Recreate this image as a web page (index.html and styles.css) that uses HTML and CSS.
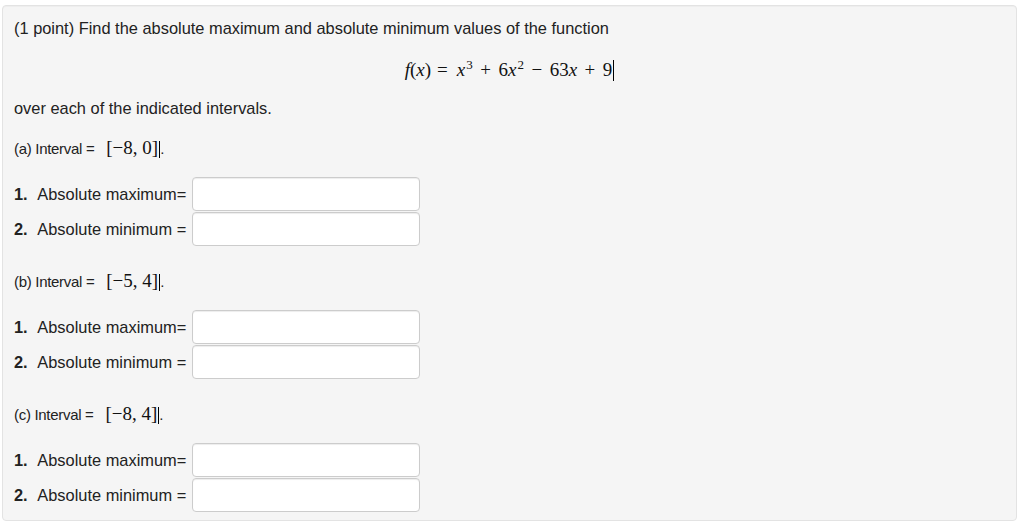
FILE: index.html
```html
<!DOCTYPE html>
<html>
<head>
<meta charset="utf-8">
<link rel="stylesheet" href="styles.css">
</head>
<body>
<div class="panel">
  <p class="line first">(1 point) Find the absolute maximum and absolute minimum values of the function</p>
  <div class="display">
    <span class="math big"><i>f</i>(<i>x</i>)<span class="rel">=</span><i>x</i><sup>3</sup><span class="bin">+</span>6<i>x</i><sup>2</sup><span class="bin">−</span>63<i>x</i><span class="bin">+</span>9<span class="caret"></span></span>
  </div>
  <p class="line">over each of the indicated intervals.</p>

  <section class="part">
    <p class="line interval">(a) Interval = <span class="math">[−8, 0]</span><span class="caret small"></span>.</p>
    <div class="row"><span class="num">1.</span> Absolute maximum= <span class="field"></span></div>
    <div class="row"><span class="num">2.</span> Absolute minimum = <span class="field"></span></div>
  </section>

  <section class="part">
    <p class="line interval">(b) Interval = <span class="math">[−5, 4]</span><span class="caret small"></span>.</p>
    <div class="row"><span class="num">1.</span> Absolute maximum= <span class="field"></span></div>
    <div class="row"><span class="num">2.</span> Absolute minimum = <span class="field"></span></div>
  </section>

  <section class="part">
    <p class="line interval">(c) Interval = <span class="math">[−8, 4]</span><span class="caret small"></span>.</p>
    <div class="row"><span class="num">1.</span> Absolute maximum= <span class="field"></span></div>
    <div class="row"><span class="num">2.</span> Absolute minimum = <span class="field"></span></div>
  </section>
</div>
</body>
</html>
```

FILE: styles.css
```css
html, body {
  margin: 0;
  padding: 0;
  background: #ffffff;
}

body {
  font-family: "Liberation Sans", Arial, Helvetica, sans-serif;
  font-size: 16.4px;
  color: #222;
}

.panel {
  margin: 5px 7px 0 2px;
  height: 516px;
  box-sizing: border-box;
  border: 1px solid #e3e3e3;
  border-radius: 4px;
  background: #f5f5f5;
  padding: 12px 11px 0 11px;
  box-shadow: inset 0 1px 1px rgba(0, 0, 0, 0.03);
}

.line {
  margin: 0;
  height: 20px;
  line-height: 20px;
  white-space: nowrap;
}

.display {
  margin-top: 20px;
  height: 24px;
  line-height: 24px;
  text-align: center;
  margin-bottom: 16px;
}

.math {
  font-family: "Liberation Serif", "Times New Roman", serif;
  color: #111;
  font-size: 19px;
}

.math.big {
  font-size: 19px;
}

.math i {
  font-style: italic;
}

.math sup {
  font-size: 13px;
  vertical-align: 0;
  position: relative;
  top: -7px;
  margin-left: 1px;
}

.rel {
  margin: 0 9px 0 6px;
}

.bin {
  margin: 0 7.5px;
}

.caret {
  display: inline-block;
  width: 1px;
  height: 21px;
  background: #000;
  vertical-align: -5px;
  margin-left: 1px;
}

.caret.small {
  height: 17px;
  vertical-align: -4px;
  margin-left: 1px;
}

.part {
  margin-top: 20px;
}

.part + .part {
  margin-top: 25px;
}

.interval {
  font-size: 15px;
  letter-spacing: -0.3px;
  margin-bottom: 19px;
}

.interval .math {
  margin-left: 8px;
  font-size: 19px;
  letter-spacing: 0;
}

.row {
  display: flex;
  align-items: center;
  height: 34px;
  margin-bottom: 1px;
  white-space: pre;
}

.num {
  font-weight: bold;
  margin-right: 6px;
}

.field {
  display: inline-block;
  margin-left: 1px;
  width: 228px;
  height: 34px;
  box-sizing: border-box;
  background: #fff;
  border: 1px solid #cccccc;
  border-radius: 4px;
  box-shadow: inset 0 1px 1px rgba(0, 0, 0, 0.075);
}
```
